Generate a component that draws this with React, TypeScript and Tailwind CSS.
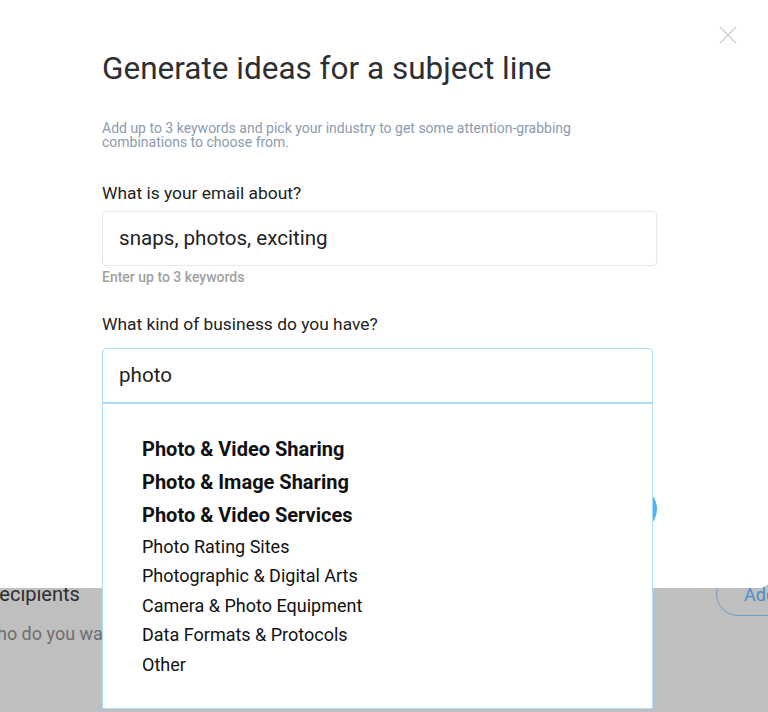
import React from 'react'

const industries = [
  { label: 'Photo & Video Sharing', match: true },
  { label: 'Photo & Image Sharing', match: true },
  { label: 'Photo & Video Services', match: true },
  { label: 'Photo Rating Sites', match: false },
  { label: 'Photographic & Digital Arts', match: false },
  { label: 'Camera & Photo Equipment', match: false },
  { label: 'Data Formats & Protocols', match: false },
  { label: 'Other', match: false },
]

const CloseIcon = () => (
  <svg width="18" height="18" viewBox="0 0 18 18" fill="none">
    <path d="M1 1L17 17M17 1L1 17" stroke="#cfcfcf" strokeWidth="1.5" />
  </svg>
)

export default function App() {
  return (
    <div
      className="relative h-[712px] w-[768px] overflow-hidden bg-[#bfbfbf]"
      style={{ fontFamily: 'Roboto, "Noto Sans", sans-serif' }}
    >
      {/* page behind the overlay */}
      <div className="flex flex-col pt-[572px]">
        <div className="flex h-[44px] items-center">
          <h2 className="-ml-[13px] text-[20px] text-[#2e2e2e]">Recipients</h2>
          <button className="ml-auto -mr-[40px] h-[44px] w-[92px] rounded-full border border-[#6a9fcc] pl-[27px] text-left text-[18px] text-[#4a8cc9]">
            Add
          </button>
        </div>
        <p className="-ml-[19px] mt-[6px] text-[18px] leading-[24px] text-[#6e6e6e]">
          Who do you want to send this to?
        </p>
      </div>

      {/* modal */}
      <div className="absolute left-[-20px] top-0 h-[588px] w-[790px] rounded-b-[10px] bg-white">
        <button className="absolute left-[739px] top-[26px]">
          <CloseIcon />
        </button>
        <div className="flex w-[677px] flex-col pl-[122px] pt-[49px]">
          <h1 className="text-[31.5px] leading-[40px] text-[#2e2e33]">
            Generate ideas for a subject line
          </h1>
          <p className="mt-[31.5px] text-[14px] leading-[14.5px] text-[#8c9bad]">
            Add up to 3 keywords and pick your industry to get some attention-grabbing
            <br />
            combinations to choose from.
          </p>
          <label className="mt-[31.5px] text-[17.4px] leading-[24px] text-[#222]">
            What is your email about?
          </label>
          <div className="mt-[6px] flex h-[55px] items-center rounded-[4px] border border-[#e6e6e6] pl-[16px] text-[20.6px] text-[#222]">
            snaps, photos, exciting
          </div>
          <span className="mt-[3px] text-[14px] font-medium leading-[16px] text-[#a0a0a0]">
            Enter up to 3 keywords
          </span>
          <label className="mt-[27px] text-[17.4px] leading-[24px] text-[#222]">
            What kind of business do you have?
          </label>
          <div className="relative mt-[12px] w-[551px]">
            <div className="flex h-[55px] items-center rounded-t-[4px] border border-[#a9dbfb] pl-[16px] text-[20.6px] text-[#222]">
              photo
            </div>
            <ul className="absolute left-0 top-full z-10 flex h-[306px] w-[551px] flex-col border border-[#a9dbfb] bg-white pl-[39px] pt-[28.5px] text-[#111]">
              {industries.map((item) =>
                item.match ? (
                  <li key={item.label} className="text-[20px] font-bold leading-[33px]">
                    {item.label}
                  </li>
                ) : (
                  <li key={item.label} className="text-[18px] leading-[29.5px]">
                    {item.label}
                  </li>
                ),
              )}
            </ul>
          </div>
          <button className="mt-[83px] h-[46px] w-[160px] self-end rounded-full bg-[#4db2f7] text-[16px] font-medium text-white">
            Generate
          </button>
        </div>
      </div>
    </div>
  )
}
